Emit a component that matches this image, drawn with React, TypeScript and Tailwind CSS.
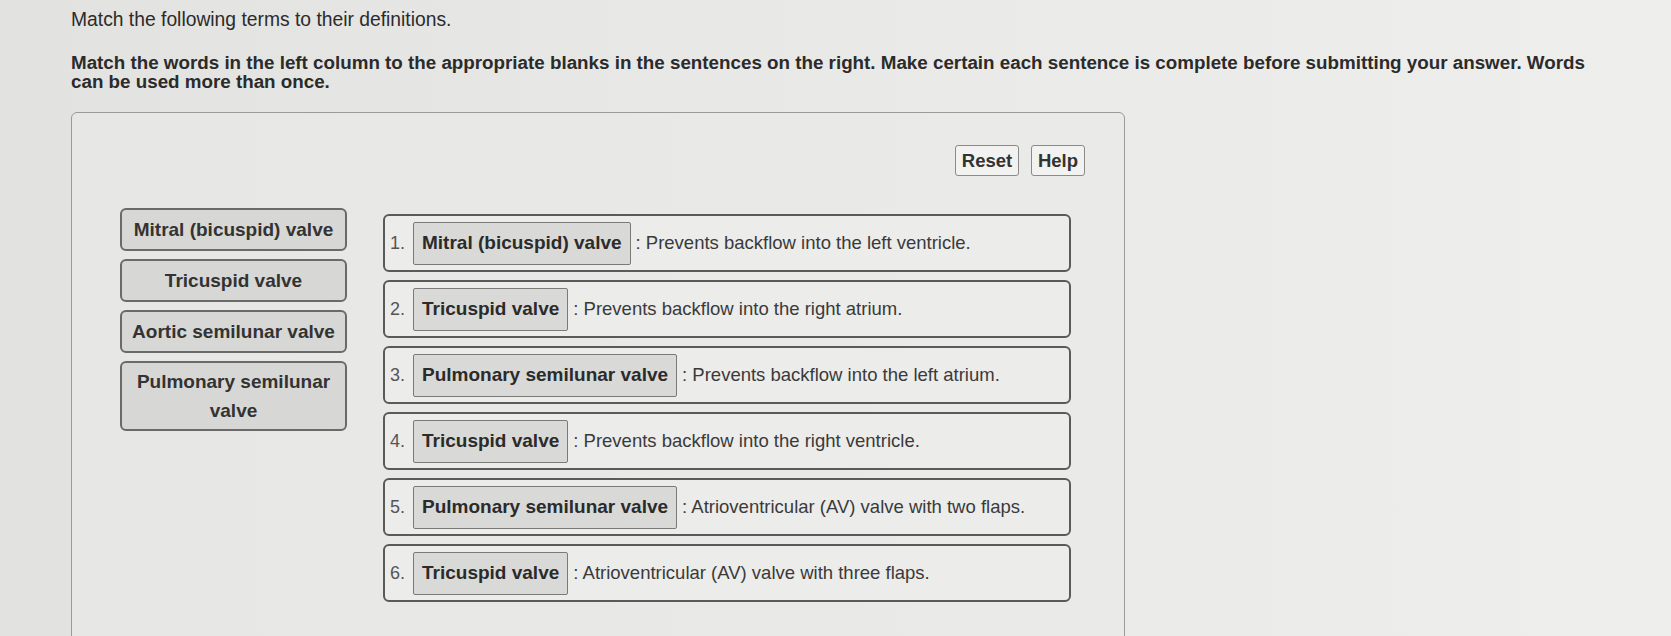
import React from "react";

const bank = [
  "Mitral (bicuspid) valve",
  "Tricuspid valve",
  "Aortic semilunar valve",
  "Pulmonary semilunar valve",
];

const rows = [
  { term: "Mitral (bicuspid) valve", text: "Prevents backflow into the left ventricle." },
  { term: "Tricuspid valve", text: "Prevents backflow into the right atrium." },
  { term: "Pulmonary semilunar valve", text: "Prevents backflow into the left atrium." },
  { term: "Tricuspid valve", text: "Prevents backflow into the right ventricle." },
  { term: "Pulmonary semilunar valve", text: "Atrioventricular (AV) valve with two flaps." },
  { term: "Tricuspid valve", text: "Atrioventricular (AV) valve with three flaps." },
];

export default function App() {
  return (
    <div
      className="h-[636px] w-full overflow-hidden bg-gradient-to-r from-[#e2e2e0] via-[#e9e9e7] to-[#eeeeec] pl-[71px] text-[#2b2b2b]"
      style={{ fontFamily: '"Liberation Sans", Arial, sans-serif' }}
    >
      <p className="pt-[10px] text-[19.3px] leading-[20px]">
        Match the following terms to their definitions.
      </p>
      <p className="mt-[23px] whitespace-nowrap text-[18.8px] font-bold leading-[19px]">
        Match the words in the left column to the appropriate blanks in the sentences on the right. Make
        certain each sentence is complete before submitting your answer. Words
        <br />
        can be used more than once.
      </p>

      <div className="mt-[21px] h-[600px] w-[1054px] rounded-md border border-[#9a9a98] bg-[#eaeae8]/60">
        <div className="flex justify-end gap-3 pr-[39px] pt-[32px]">
          <button className="h-[31px] w-[64px] rounded-[3px] border border-[#8a8a88] bg-[#f2f2f0] text-[18.5px] font-bold text-[#333]">
            Reset
          </button>
          <button className="h-[31px] w-[54px] rounded-[3px] border border-[#8a8a88] bg-[#f2f2f0] text-[18.5px] font-bold text-[#333]">
            Help
          </button>
        </div>

        <div className="mt-[32px] flex items-start pl-[48px]">
          <div className="flex w-[227px] flex-col gap-2">
            {bank.map((t) => (
              <div
                key={t}
                className="flex min-h-[43px] items-center justify-center rounded-md border-2 border-[#6a6a68] bg-[#d7d7d5] px-2 py-[4px] text-center text-[19px] font-bold leading-[29px] text-[#333]"
              >
                {t}
              </div>
            ))}
          </div>

          <div className="ml-[36px] mt-[6px] flex w-[688px] flex-col gap-2">
            {rows.map((r, i) => (
              <div
                key={i}
                className="flex h-[58px] items-center rounded-md border-2 border-[#5a5a58] bg-[#ececea] pl-[5px]"
              >
                <span className="w-[23px] text-[18px] text-[#555]">{i + 1}.</span>
                <span className="flex h-[43px] items-center rounded-[2px] border border-[#7a7a78] bg-[#d9d9d7] px-[8px] text-[19px] font-bold text-[#2b2b2b]">
                  {r.term}
                </span>
                <span className="ml-[5px] text-[18.5px] text-[#3a3a3a]">: {r.text}</span>
              </div>
            ))}
          </div>
        </div>
      </div>
    </div>
  );
}
